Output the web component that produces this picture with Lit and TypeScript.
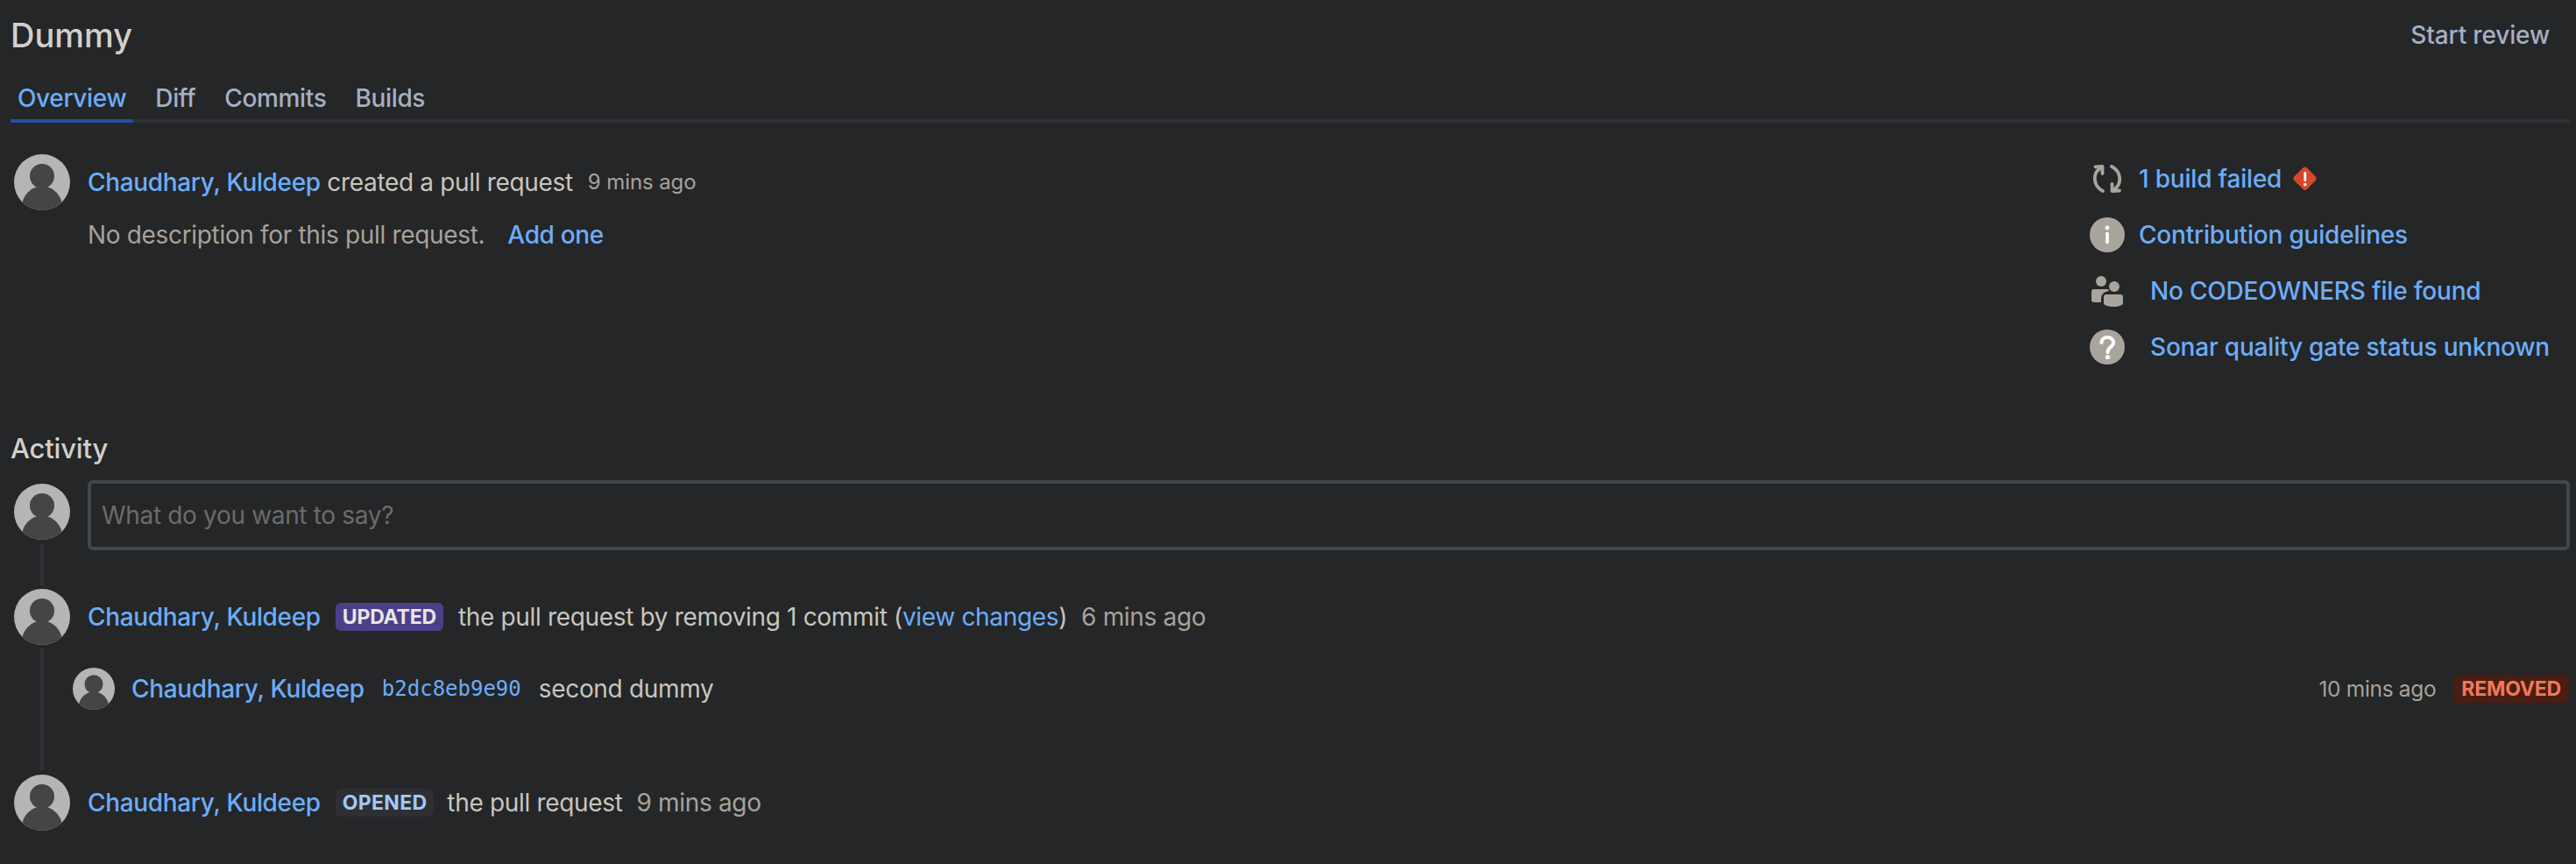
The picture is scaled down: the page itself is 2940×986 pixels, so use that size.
import {LitElement, css, html, svg} from 'lit';
import {customElement} from 'lit/decorators.js';

const NAME = 'Chaudhary, Kuldeep';

const avatar = (small = false) => html`
  <svg class=${small ? 'avatar small' : 'avatar'} viewBox="0 0 64 64">
    <defs><clipPath id="round"><circle cx="32" cy="32" r="32"></circle></clipPath></defs>
    <g clip-path="url(#round)">
      <rect width="64" height="64" fill="#b5b5b5"></rect>
      <circle cx="32" cy="25" r="14" fill="#454545"></circle>
      <ellipse cx="32" cy="60" rx="23" ry="23.5" fill="#454545"></ellipse>
    </g>
  </svg>`;

const ICON_BUILD = svg`
  <g fill="none" stroke="#aaa59c" stroke-width="3.8" stroke-linecap="round" stroke-linejoin="round">
    <path d="M11 30C3 26 .5 18 2.5 11 3.5 7.5 6 5 10 3"></path>
    <path d="M2.5 2.5 10.5 2 10.5 10"></path>
    <path d="M21 2C29 6 31.5 14 29.5 21 28.5 24.5 26 27 22 29"></path>
    <path d="M30 29.5 21.5 30 21.5 22"></path>
  </g>`;

const ICON_INFO = svg`
  <circle cx="20" cy="20" r="20" fill="#aaa59c"></circle>
  <circle cx="20" cy="12" r="2.4" fill="#fff"></circle>
  <rect x="18.2" y="17" width="3.6" height="13" rx="1.2" fill="#fff"></rect>`;

const ICON_USERS = svg`
  <g fill="#aaa59c">
    <circle cx="11" cy="7" r="6"></circle>
    <circle cx="26" cy="13" r="6"></circle>
    <path d="M3 16H18C19 16 20 17 20 18 14 19 11 22 11 27V31H3C1 31 0 30 0 28V19C0 17 1 16 3 16Z"></path>
    <path d="M17 22H33C35 22 36 23 36 25V32C36 34 31 36 25 36 19 36 14 34 14 32V25C14 23 15 22 17 22Z"></path>
  </g>`;

const ICON_HELP = svg`
  <circle cx="20" cy="20" r="20" fill="#aaa59c"></circle>
  <path d="M13.5 15C13.5 11 16.5 9 20 9 24 9 27 11 27 15 27 20 20.5 20 20.5 26" fill="none" stroke="#fff" stroke-width="4" stroke-linecap="round"></path>
  <circle cx="20.5" cy="31.5" r="2.6" fill="#fff"></circle>`;

const ICON_FAILED = svg`
  <path d="M11.5 1.5C12.8.3 14.8.3 16 1.5L25.8 11.6C27 12.8 27 14.8 25.8 16L16 26C14.8 27.2 12.8 27.2 11.5 26L1.4 16C.2 14.8.2 12.8 1.4 11.6Z" fill="#d2482a"></path>
  <rect x="12.4" y="6" width="2.8" height="11" rx="1" fill="#fff"></rect>
  <circle cx="13.8" cy="20.6" r="1.8" fill="#fff"></circle>`;

const CHECKS = [
  {w: 32, h: 32, icon: ICON_BUILD, label: '1 build failed', failed: true, wide: false},
  {w: 40, h: 40, icon: ICON_INFO, label: 'Contribution guidelines', failed: false, wide: false},
  {w: 36, h: 36, icon: ICON_USERS, label: 'No CODEOWNERS file found', failed: false, wide: true},
  {w: 40, h: 40, icon: ICON_HELP, label: 'Sonar quality gate status unknown', failed: false, wide: true},
];

const TABS = ['Overview', 'Diff', 'Commits', 'Builds'];

@customElement('app-root')
export class AppRoot extends LitElement {
  static styles = css`
    :host {
      display: block;
      height: 986px;
      box-sizing: border-box;
      padding: 0 6px 0 12px;
      background: #242628;
      color: #c9c5be;
      font: 400 28px/40px Inter, "Liberation Sans", sans-serif;
      letter-spacing: -.33px;
      white-space: nowrap;
      overflow: hidden;
    }
    a { color: #6cadf8; text-decoration: none; }
    .name { font-weight: 500; letter-spacing: -.33px; }
    .time { color: #a8a29a; }
    .header {
      display: flex;
      justify-content: space-between;
      align-items: center;
      height: 80px;
    }
    h1 {
      margin: 0;
      font-size: 38px;
      font-weight: 500;
      color: #d3cfc9;
      letter-spacing: 0;
    }
    .start {
      margin-right: 24px;
      color: #a5b0c2;
      font-weight: 500;
      letter-spacing: -.15px;
    }
    .tabs {
      display: flex;
      gap: 17px;
      height: 60px;
      box-sizing: border-box;
      border-bottom: 4px solid #2f3134;
    }
    .tab {
      height: 60px;
      box-sizing: border-box;
      padding: 12px 8px 0;
      color: #a5b0c2;
      font-weight: 500;
      letter-spacing: -.35px;
    }
    .tab.active {
      color: #6cadf8;
      border-bottom: 4px solid #2150a8;
    }
    .overview {
      display: flex;
      justify-content: space-between;
      height: 350px;
      padding-top: 32px;
      box-sizing: border-box;
    }
    .summary {
      display: grid;
      grid-template-columns: 64px 1fr;
      column-gap: 20px;
      margin: 4px 0 0 4px;
      align-self: flex-start;
    }
    .summary .line {
      height: 64px;
      display: flex;
      align-items: center;
      white-space: pre;
    }
    .summary .desc {
      grid-column: 2;
      display: flex;
      gap: 26px;
      color: #a8a29a;
      margin-top: 8px;
    }
    .summary .time { font-size: 24px; margin-left: 17px; letter-spacing: -.1px; }
    .checks { margin-right: 25px; width: 524px; }
    .check {
      display: flex;
      align-items: center;
      gap: 16px;
      height: 64px;
      font-weight: 500;
      letter-spacing: -.2px;
    }
    .check.wide { gap: 29px; }
    .check .slot {
      width: 40px;
      display: flex;
      justify-content: center;
      flex: none;
    }
    .check .failed { margin-left: -3px; }
    h2 {
      margin: 0 0 14px;
      height: 44px;
      font-size: 31px;
      line-height: 44px;
      font-weight: 500;
      color: #d3cfc9;
      letter-spacing: -.2px;
    }
    .entry {
      display: flex;
      gap: 3px;
    }
    .rail {
      display: flex;
      flex-direction: column;
      align-items: center;
      gap: 4px;
      width: 64px;
      margin-left: 4px;
      flex: none;
      padding-bottom: 4px;
      box-sizing: border-box;
    }
    .rail .line {
      flex: 1;
      width: 4px;
      background: #2f3134;
    }
    .body { flex: 1; min-width: 0; }
    .comment { height: 124px; }
    .comment .rail { padding-top: 4px; }
    input {
      display: block;
      width: calc(100% - 18px);
      height: 80px;
      box-sizing: border-box;
      margin-left: 17px;
      padding: 0 12px;
      border: 4px solid #44474a;
      border-radius: 6px;
      background: transparent;
      color: #c9c5be;
      font: inherit;
      letter-spacing: -.33px;
      outline: none;
    }
    input::placeholder { color: #6d6b67; opacity: 1; }
    .head {
      display: flex;
      align-items: center;
      height: 64px;
      padding-left: 17px;
      white-space: pre;
    }
    .badge {
      display: inline-flex;
      align-items: center;
      height: 32px;
      padding: 0 8px;
      margin: 0 17px;
      border-radius: 6px;
      font-size: 23px;
      font-weight: 700;
      letter-spacing: 0;
    }
    .badge.updated { background: #4c3f8a; color: #e8e6e3; letter-spacing: -.2px; }
    .badge.opened { background: #2d2f33; color: #a3c8f7; letter-spacing: .3px; margin-right: 15px; }
    .badge.removed { background: #4a1d12; color: #f0795a; margin: 0; padding: 0 9px; letter-spacing: -.2px; }
    .head .time { margin-left: 16px; }
    .commit {
      display: flex;
      align-items: center;
      height: 48px;
      margin: 26px 2px 0 0;
      gap: 19px;
    }
    .avatar { width: 64px; height: 64px; flex: none; display: block; }
    .avatar.small { width: 48px; height: 48px; }
    .hash {
      color: #6cadf8;
      font: 24px "DejaVu Sans Mono", monospace;
      letter-spacing: 0;
      margin-left: 1px;
    }
    .commit .msg { margin-left: 1px; }
    .commit .time {
      margin-left: auto;
      margin-right: 1px;
      font-size: 24.5px;
    }
    .tall { height: 212px; }
  `;

  renderCheck(c: typeof CHECKS[number]) {
    return html`
      <div class=${c.wide ? 'check wide' : 'check'}>
        <span class="slot">
          <svg width=${c.w} height=${c.h} viewBox="0 0 ${c.w} ${c.h}">${c.icon}</svg>
        </span>
        <a>${c.label}</a>
        ${c.failed ? html`<svg class="failed" width="27" height="28" viewBox="0 0 27 28">${ICON_FAILED}</svg>` : ''}
      </div>`;
  }

  render() {
    return html`
      <div class="header">
        <h1>Dummy</h1>
        <span class="start">Start review</span>
      </div>
      <div class="tabs">
        ${TABS.map((t, i) => html`<div class=${i == 0 ? 'tab active' : 'tab'}>${t}</div>`)}
      </div>

      <div class="overview">
        <div class="summary">
          ${avatar()}
          <div class="line"><a class="name">${NAME}</a><span> created a pull request</span><span class="time">9 mins ago</span></div>
          <div class="desc">
            <span>No description for this pull request.</span>
            <a class="name">Add one</a>
          </div>
        </div>
        <div class="checks">${CHECKS.map(c => this.renderCheck(c))}</div>
      </div>

      <h2>Activity</h2>
      <div class="entry comment">
        <div class="rail">${avatar()}<div class="line"></div></div>
        <div class="body"><input placeholder="What do you want to say?"></div>
      </div>

      <div class="entry tall">
        <div class="rail">${avatar()}<div class="line"></div></div>
        <div class="body">
          <div class="head">
            <a class="name">${NAME}</a>
            <span class="badge updated">UPDATED</span>
            <span>the pull request by removing 1 commit (<a>view changes</a>)</span>
            <span class="time">6 mins ago</span>
          </div>
          <div class="commit">
            ${avatar(true)}
            <a class="name">${NAME}</a>
            <span class="hash">b2dc8eb9e90</span>
            <span class="msg">second dummy</span>
            <span class="time">10 mins ago</span>
            <span class="badge removed">REMOVED</span>
          </div>
        </div>
      </div>

      <div class="entry">
        <div class="rail">${avatar()}</div>
        <div class="body">
          <div class="head">
            <a class="name">${NAME}</a>
            <span class="badge opened">OPENED</span>
            <span>the pull request</span>
            <span class="time">9 mins ago</span>
          </div>
        </div>
      </div>
    `;
  }
}
